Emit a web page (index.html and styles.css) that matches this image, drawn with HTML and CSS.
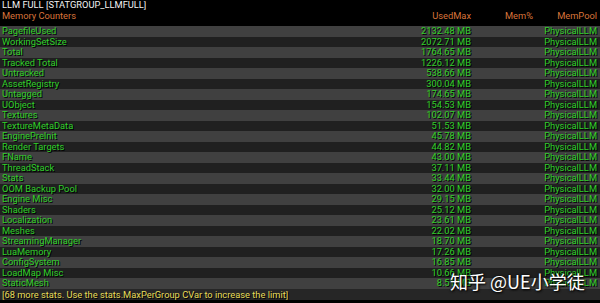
FILE: index.html
```html
<!DOCTYPE html>
<html>
<head>
<meta charset="utf-8">
<link rel="stylesheet" href="styles.css">
</head>
<body>
<div class="screen">
  <div class="title">LLM FULL [STATGROUP_LLMFULL]</div>
  <div class="row head">
    <span class="name">Memory Counters</span>
    <span class="num">UsedMax</span>
    <span class="num">Mem%</span>
    <span class="num">MemPool</span>
  </div>
  <div class="rows">
    <div class="row"><span class="name">PagefileUsed</span><span class="num">2132.48 MB</span><span class="num"></span><span class="num">PhysicalLLM</span></div>
    <div class="row"><span class="name">WorkingSetSize</span><span class="num">2072.71 MB</span><span class="num"></span><span class="num">PhysicalLLM</span></div>
    <div class="row"><span class="name">Total</span><span class="num">1764.65 MB</span><span class="num"></span><span class="num">PhysicalLLM</span></div>
    <div class="row"><span class="name">Tracked Total</span><span class="num">1226.12 MB</span><span class="num"></span><span class="num">PhysicalLLM</span></div>
    <div class="row"><span class="name">Untracked</span><span class="num">538.66 MB</span><span class="num"></span><span class="num">PhysicalLLM</span></div>
    <div class="row"><span class="name">AssetRegistry</span><span class="num">300.04 MB</span><span class="num"></span><span class="num">PhysicalLLM</span></div>
    <div class="row"><span class="name">Untagged</span><span class="num">174.65 MB</span><span class="num"></span><span class="num">PhysicalLLM</span></div>
    <div class="row"><span class="name">UObject</span><span class="num">154.53 MB</span><span class="num"></span><span class="num">PhysicalLLM</span></div>
    <div class="row"><span class="name">Textures</span><span class="num">102.07 MB</span><span class="num"></span><span class="num">PhysicalLLM</span></div>
    <div class="row"><span class="name">TextureMetaData</span><span class="num">51.53 MB</span><span class="num"></span><span class="num">PhysicalLLM</span></div>
    <div class="row"><span class="name">EnginePreInit</span><span class="num">45.78 MB</span><span class="num"></span><span class="num">PhysicalLLM</span></div>
    <div class="row"><span class="name">Render Targets</span><span class="num">44.82 MB</span><span class="num"></span><span class="num">PhysicalLLM</span></div>
    <div class="row"><span class="name">FName</span><span class="num">43.00 MB</span><span class="num"></span><span class="num">PhysicalLLM</span></div>
    <div class="row"><span class="name">ThreadStack</span><span class="num">37.11 MB</span><span class="num"></span><span class="num">PhysicalLLM</span></div>
    <div class="row"><span class="name">Stats</span><span class="num">33.44 MB</span><span class="num"></span><span class="num">PhysicalLLM</span></div>
    <div class="row"><span class="name">OOM Backup Pool</span><span class="num">32.00 MB</span><span class="num"></span><span class="num">PhysicalLLM</span></div>
    <div class="row"><span class="name">Engine Misc</span><span class="num">29.15 MB</span><span class="num"></span><span class="num">PhysicalLLM</span></div>
    <div class="row"><span class="name">Shaders</span><span class="num">25.12 MB</span><span class="num"></span><span class="num">PhysicalLLM</span></div>
    <div class="row"><span class="name">Localization</span><span class="num">23.61 MB</span><span class="num"></span><span class="num">PhysicalLLM</span></div>
    <div class="row"><span class="name">Meshes</span><span class="num">22.02 MB</span><span class="num"></span><span class="num">PhysicalLLM</span></div>
    <div class="row"><span class="name">StreamingManager</span><span class="num">18.70 MB</span><span class="num"></span><span class="num">PhysicalLLM</span></div>
    <div class="row"><span class="name">LuaMemory</span><span class="num">17.26 MB</span><span class="num"></span><span class="num">PhysicalLLM</span></div>
    <div class="row"><span class="name">ConfigSystem</span><span class="num">16.85 MB</span><span class="num"></span><span class="num">PhysicalLLM</span></div>
    <div class="row"><span class="name">LoadMap Misc</span><span class="num">10.66 MB</span><span class="num"></span><span class="num">PhysicalLLM</span></div>
    <div class="row"><span class="name">StaticMesh</span><span class="num">8.51 MB</span><span class="num"></span><span class="num">PhysicalLLM</span></div>
  </div>
  <div class="footer">[68 more stats. Use the stats.MaxPerGroup CVar to increase the limit]</div>
  <div class="watermark">知乎 @UE小学徒</div>
</div>
</body>
</html>
```
FILE: styles.css
```css
html, body {
  margin: 0;
  padding: 0;
  background: #000;
}
.screen {
  position: relative;
  width: 600px;
  height: 303px;
  overflow: hidden;
  background: #000;
  font-family: Roboto, "Liberation Sans", sans-serif;
  font-size: 9.3px;
  text-shadow: 1px 1px 0 #000;
}
.title {
  height: 10px;
  line-height: 10px;
  padding-left: 2px;
  color: #f2f2f2;
}
.row {
  display: grid;
  grid-template-columns: 1fr 100px 62px 64px;
  padding: 0 3px 0 2px;
  height: 10.52px;
  line-height: 10.52px;
  color: #2fcf2a;
  white-space: nowrap;
}
.row .num {
  text-align: right;
}
.head {
  color: #d8743a;
  height: 11px;
  line-height: 11px;
  margin-bottom: 5px;
}
.rows .row:nth-child(odd) {
  background: #404040;
}
.rows .row:nth-child(even) {
  background: #202020;
}
.footer {
  height: 11px;
  line-height: 11px;
  padding-left: 2px;
  color: #e6dc5a;
  background: #262626;
  white-space: nowrap;
}
.watermark {
  position: absolute;
  left: 450px;
  top: 270px;
  font-family: "Noto Sans CJK SC", "Noto Sans", sans-serif;
  font-size: 18px;
  line-height: 22px;
  color: #fff;
  text-shadow: 0 0 3px rgba(0,0,0,0.9), 1px 1px 2px #000;
}
```
